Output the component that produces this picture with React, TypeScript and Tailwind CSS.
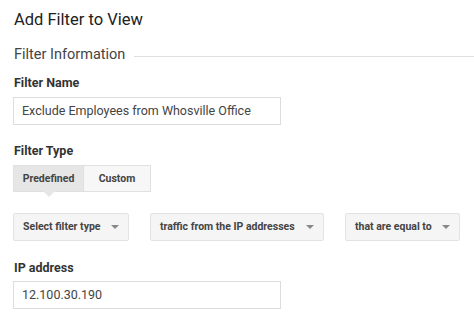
export default function App() {
  const selects = [
    { label: "Select filter type", w: "w-[116px]" },
    { label: "traffic from the IP addresses", w: "w-[174px]" },
    { label: "that are equal to", w: "w-[115px]" },
  ];

  return (
    <div className="h-[322px] w-[474px] overflow-hidden bg-white pl-[13px] font-['Roboto',sans-serif] text-[#333]">
      {/* Header */}
      <h1 className="pt-[8px] pl-px text-[16.5px] leading-[24px] text-[#212121]">Add Filter to View</h1>

      <div className="mt-[13px] flex items-center gap-[9px]">
        <h2 className="pl-px text-[14.5px] leading-[20px] text-[#444]">Filter Information</h2>
        <div className="mt-[2px] h-px flex-1 bg-[#e0e0e0]" />
      </div>

      {/* Filter name */}
      <label className="mt-[10px] block pl-px text-[12.5px] font-bold leading-[16px] text-[#333]">Filter Name</label>
      <div className="mt-[6px] flex h-[28px] w-[268px] items-center border border-[#dcdcdc] px-[8px] text-[12.5px] text-[#444]">
        Exclude Employees from Whosville Office
      </div>

      {/* Filter type */}
      <label className="mt-[18px] block pl-px text-[12.5px] font-bold leading-[16px] text-[#333]">Filter Type</label>
      <div className="mt-[6px] flex h-[27px] w-[138px] border border-[#e0e0e0] text-[10.5px] font-bold text-[#444]">
        <div className="relative flex w-[69px] items-center justify-center bg-[#e6e6e6]">
          Predefined
          <span className="absolute left-[29px] top-full h-0 w-0 border-x-[6px] border-t-[6px] border-x-transparent border-t-[#e6e6e6]" />
        </div>
        <div className="flex flex-1 items-center justify-center border-l border-[#e0e0e0] bg-[#f7f7f7]">Custom</div>
      </div>

      <div className="mt-[21px] flex gap-[21px]">
        {selects.map((s) => (
          <div
            key={s.label}
            className={`${s.w} flex h-[28px] items-center justify-between rounded-[2px] border border-[#e3e3e3] bg-[#f5f5f5] pl-[9px] pr-[9px] text-[10.5px] font-bold text-[#444]`}
          >
            <span className="whitespace-nowrap">{s.label}</span>
            <span className="h-0 w-0 border-x-[4px] border-t-[4px] border-x-transparent border-t-[#888]" />
          </div>
        ))}
      </div>

      {/* IP address */}
      <label className="mt-[19px] block pl-px text-[12.5px] font-bold leading-[16px] text-[#333]">IP address</label>
      <div className="mt-[5px] flex h-[28px] w-[268px] items-center border border-[#dcdcdc] px-[8px] text-[12.5px] text-[#444]">
        12.100.30.190
      </div>
    </div>
  );
}
